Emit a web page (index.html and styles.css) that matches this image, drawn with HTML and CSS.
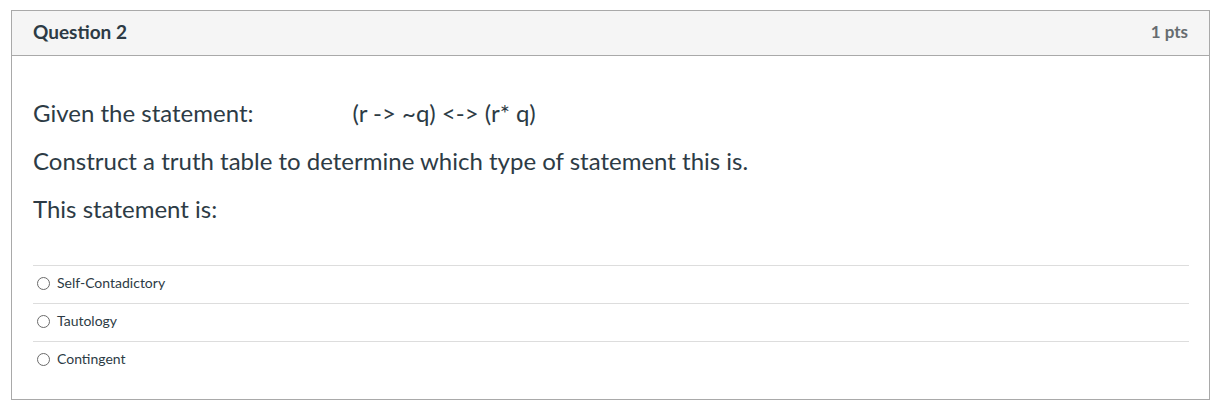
FILE: index.html
```html
<!DOCTYPE html>
<html>
<head>
<meta charset="utf-8">
<link rel="stylesheet" href="styles.css">
</head>
<body>
<div class="question">
  <div class="q-header">
    <span class="q-name">Question 2</span>
    <span class="q-points">1 pts</span>
  </div>
  <div class="q-body">
    <p class="q-text">Given the statement:<span class="formula">(r -&gt; ~q) &lt;-&gt; (r* q)</span></p>
    <p class="q-text">Construct a truth table to determine which type of statement this is.</p>
    <p class="q-text">This statement is:</p>
    <div class="answers">
      <label class="answer"><span class="radio"></span><span class="answer-text">Self-Contadictory</span></label>
      <label class="answer"><span class="radio"></span><span class="answer-text">Tautology</span></label>
      <label class="answer"><span class="radio"></span><span class="answer-text">Contingent</span></label>
    </div>
  </div>
</div>
</body>
</html>
```

FILE: styles.css
```css
html, body {
  margin: 0;
  padding: 0;
  background: #ffffff;
}
body {
  font-family: Lato, "Liberation Sans", sans-serif;
  color: #2d3b45;
}
.question {
  box-sizing: border-box;
  width: 1199px;
  margin: 10px 0 0 11px;
  border: 1px solid #a9a9a9;
}
.q-header {
  box-sizing: border-box;
  height: 45px;
  display: flex;
  align-items: center;
  justify-content: space-between;
  padding: 0 21px 4px 21px;
  background: #f5f5f5;
  border-bottom: 1px solid #a9a9a9;
}
.q-name {
  font-weight: bold;
  font-size: 19px;
  color: #2d3b45;
}
.q-points {
  font-weight: bold;
  font-size: 17px;
  color: #666c70;
}
.q-body {
  padding: 43px 20px 20px 21px;
}
.q-text {
  margin: 0 0 20px 0;
  font-size: 24px;
  font-weight: 400;
  line-height: 28px;
}
.formula {
  margin-left: 99px;
}
.answers {
  margin-top: 42px;
}
.answer {
  display: flex;
  align-items: center;
  box-sizing: border-box;
  height: 38px;
  border-top: 1px solid #dddddd;
  padding: 0 0 4px 4px;
  font-size: 14px;
}
.radio {
  box-sizing: border-box;
  width: 13px;
  height: 13px;
  border: 1px solid #6b6b6b;
  border-radius: 50%;
  margin-right: 7px;
  margin-top: 1px;
}
.answer-text {
  color: #2d3b45;
}
```
